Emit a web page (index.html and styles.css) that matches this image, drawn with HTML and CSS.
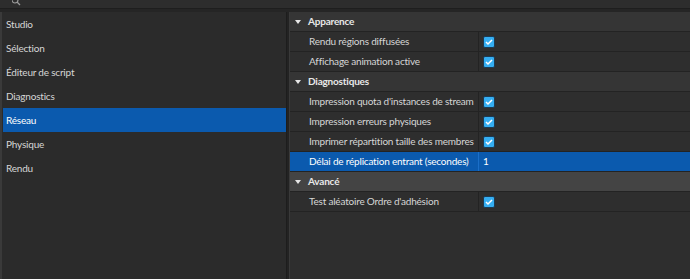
FILE: index.html
```html
<!DOCTYPE html>
<html lang="fr">
<head>
	<meta charset="UTF-8" />
	<title>Paramètres</title>
	<link rel="stylesheet" href="styles.css">
</head>
<body>
	<div class="topbar">
		<svg class="search" width="10" height="8" viewBox="0 0 10 8">
			<circle cx="3" cy="0" r="3" fill="none" stroke="#9a9a9a" stroke-width="1.2"/>
			<path d="M5 2 L8 5" stroke="#9a9a9a" stroke-width="1.3"/>
		</svg>
	</div>
	<div class="main">
		<div class="edge"></div>
		<ul class="cats">
			<li>Studio</li>
			<li>Sélection</li>
			<li>Éditeur de script</li>
			<li>Diagnostics</li>
			<li class="on">Réseau</li>
			<li>Physique</li>
			<li>Rendu</li>
		</ul>
		<div class="sep"></div>
		<div class="props">
			<div class="group"><span class="tri"></span>Apparence</div>
			<div class="row"><span class="name">Rendu régions diffusées</span><span class="val"><i class="chk"></i></span></div>
			<div class="row"><span class="name">Affichage animation active</span><span class="val"><i class="chk"></i></span></div>
			<div class="group"><span class="tri"></span>Diagnostiques</div>
			<div class="row"><span class="name">Impression quota d'instances de stream</span><span class="val"><i class="chk"></i></span></div>
			<div class="row"><span class="name">Impression erreurs physiques</span><span class="val"><i class="chk"></i></span></div>
			<div class="row"><span class="name">Imprimer répartition taille des membres</span><span class="val"><i class="chk"></i></span></div>
			<div class="row on"><span class="name">Délai de réplication entrant (secondes)</span><span class="val">1</span></div>
			<div class="group hover"><span class="tri"></span>Avancé</div>
			<div class="row"><span class="name">Test aléatoire Ordre d'adhésion</span><span class="val"><i class="chk"></i></span></div>
		</div>
	</div>
</body>
</html>
```

FILE: styles.css
```css
*{
	box-sizing: border-box;
}
body{
	margin: 0;
	background: #2b2b2b;
	font-family: "Lato", "Noto Sans", sans-serif;
	color: #d6d6d6;
	height: 279px;
	overflow: hidden;
}
.topbar{
	height: 9px;
	background: #2d2d2d;
	border-bottom: 1px solid #1e1e1e;
	position: relative;
}
.search{
	position: absolute;
	left: 12px;
	top: 0;
}
.main{
	display: flex;
	height: 270px;
	padding-top: 3px;
	background: #252525;
}
.edge{
	width: 2px;
	background: #3a3a3a;
}
.cats{
	list-style: none;
	margin: 0;
	padding: 0 0 0 1px;
	width: 284px;
	background: #2b2b2b;
	font-size: 10px;
	letter-spacing: -0.2px;
}
.cats li{
	height: 24px;
	line-height: 25px;
	padding-left: 3px;
}
.cats li.on{
	background: #0b5aae;
	color: #ffffff;
}
.sep{
	width: 3px;
	background: #232323;
	border-left: 1px solid #1d1d1d;
}
.props{
	flex: 1;
	background: #2e2e2e;
	border-left: 1px solid #3a3a3a;
	font-size: 10px;
	letter-spacing: -0.2px;
}
.group{
	height: 20px;
	line-height: 19px;
	background: #353535;
	border-bottom: 1px solid #232323;
	font-weight: bold;
	color: #e8e8e8;
	display: flex;
	align-items: center;
}
.group.hover{
	background: #444444;
}
.tri{
	width: 0;
	height: 0;
	border-left: 3.5px solid transparent;
	border-right: 3.5px solid transparent;
	border-top: 4px solid #e6e6e6;
	margin: 0 7px 0 5px;
}
.row{
	display: flex;
	height: 20px;
	line-height: 19px;
	border-bottom: 1px solid #232323;
}
.row .name{
	width: 189px;
	padding-left: 19px;
	border-right: 1px solid #232323;
	white-space: nowrap;
}
.row .val{
	flex: 1;
	padding-left: 4px;
	display: flex;
	align-items: center;
}
.row.on{
	background: #0b5aae;
	color: #ffffff;
}
.row.on .name{
	border-right-color: #1b6fc8;
}
.chk{
	width: 12px;
	height: 12px;
	border: 1px solid #1c3a52;
	border-radius: 2px;
	background: #35aef2 url("data:image/svg+xml;utf8,<svg xmlns='http://www.w3.org/2000/svg' width='10' height='10'><path d='M2 5 L4 7 L8 3' fill='none' stroke='white' stroke-width='1.5'/></svg>") no-repeat center;
}
```
